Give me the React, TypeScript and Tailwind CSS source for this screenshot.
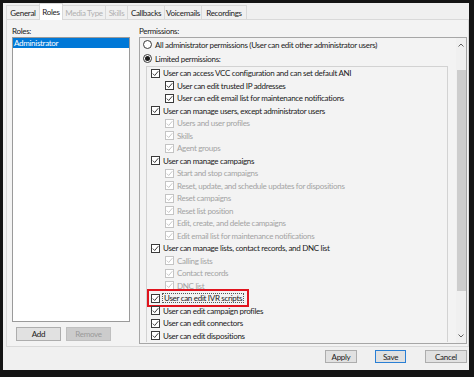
import clsx from 'clsx';

type Perm = { label: string; level: 0 | 1; disabled?: boolean; highlight?: boolean };

const TABS = [
  { label: 'General', w: 'w-[34px]' },
  { label: 'Roles', w: 'w-[24px]', active: true },
  { label: 'Media Type', w: 'w-[44px]', disabled: true },
  { label: 'Skills', w: 'w-[23px]', disabled: true },
  { label: 'Callbacks', w: 'w-[38px]' },
  { label: 'Voicemails', w: 'w-[38px]' },
  { label: 'Recordings', w: 'w-[46px]' },
];

const PERMS: Perm[] = [
  { label: 'User can access VCC configuration and can set default ANI', level: 0 },
  { label: 'User can edit trusted IP addresses', level: 1 },
  { label: 'User can edit email list for maintenance notifications', level: 1 },
  { label: 'User can manage users, except administrator users', level: 0 },
  { label: 'Users and user profiles', level: 1, disabled: true },
  { label: 'Skills', level: 1, disabled: true },
  { label: 'Agent groups', level: 1, disabled: true },
  { label: 'User can manage campaigns', level: 0 },
  { label: 'Start and stop campaigns', level: 1, disabled: true },
  { label: 'Reset, update, and schedule updates for dispositions', level: 1, disabled: true },
  { label: 'Reset campaigns', level: 1, disabled: true },
  { label: 'Reset list position', level: 1, disabled: true },
  { label: 'Edit, create, and delete campaigns', level: 1, disabled: true },
  { label: 'Edit email list for maintenance notifications', level: 1, disabled: true },
  { label: 'User can manage lists, contact records, and DNC list', level: 0 },
  { label: 'Calling lists', level: 1, disabled: true },
  { label: 'Contact records', level: 1, disabled: true },
  { label: 'DNC list', level: 1, disabled: true },
  { label: 'User can edit IVR scripts', level: 0, highlight: true },
  { label: 'User can edit campaign profiles', level: 0 },
  { label: 'User can edit connectors', level: 0 },
  { label: 'User can edit dispositions', level: 0 },
];

function CheckBox({ disabled }: { disabled?: boolean }) {
  return (
    <div
      className={clsx(
        'w-[9px] h-[9px] border bg-white flex items-center justify-center shrink-0',
        disabled ? 'border-[#c4c4c4]' : 'border-[#3a3a3a]',
      )}
    >
      <svg width="7" height="7" viewBox="0 0 7 7">
        <path
          d="M0.8 3.6 L2.7 5.5 L6.3 1.2"
          fill="none"
          stroke={disabled ? '#c0c0c0' : '#2a2a2a'}
          strokeWidth="0.9"
        />
      </svg>
    </div>
  );
}

function Radio({ checked }: { checked?: boolean }) {
  return (
    <div className="w-[9px] h-[9px] rounded-full border border-[#3a3a3a] bg-white flex items-center justify-center shrink-0">
      {checked && <div className="w-[5px] h-[5px] rounded-full bg-[#1a1a1a]" />}
    </div>
  );
}

function Button({ label, disabled, primary, className }: { label: string; disabled?: boolean; primary?: boolean; className?: string }) {
  return (
    <div
      className={clsx(
        'flex items-center justify-center border',
        disabled ? 'bg-[#cccccc] border-[#bfbfbf] text-[#9a9a9a]' : 'bg-[#e1e1e1] text-[#1a1a1a]',
        primary ? 'border-[#2a7fd4]' : !disabled && 'border-[#adadad]',
        className,
      )}
    >
      {label}
    </div>
  );
}

export default function App() {
  return (
    <div
      className="w-[474px] h-[377px] border-l-[3px] border-t-[3px] border-r-[5px] border-b-[7px] border-[#141414] bg-[#f0f0f0] flex flex-col text-[#1a1a1a] leading-none text-[8px] tracking-[-0.3px]"
      style={{ fontFamily: 'Lato, "Noto Sans", sans-serif' }}
    >
      {/* tab strip */}
      <div className="h-[16px] pl-[3px] flex items-end">
        {TABS.map(t => (
          <div
            key={t.label}
            className={clsx(
              'flex items-center justify-center whitespace-nowrap border-t border-l border-r -mr-px',
              t.w,
              t.active
                ? 'h-[17px] bg-white border-[#d9d9d9] relative z-10 -mb-px'
                : 'h-[14px] bg-[#f0f0f0] border-[#d9d9d9]',
              t.disabled ? 'text-[#b0b0b0]' : 'text-[#1a1a1a]',
            )}
          >
            {t.label}
          </div>
        ))}
      </div>

      {/* tab page */}
      <div className="ml-[3px] h-[328px] border border-[#d9d9d9] bg-[#f3f3f3] flex pl-[5px]">
        <div className="w-[118px] flex flex-col">
          <div className="mt-[5px] h-[11px] flex items-center">Roles:</div>
          <div className="mt-[1px] h-[285px] border border-[#9a9a9a] bg-white">
            <div className="h-[10px] bg-[#0078d7] text-white flex items-center pl-[1px]">Administrator</div>
          </div>
          <div className="mt-[5px] pl-[4px] flex gap-[5px]">
            <Button label="Add" className="w-[45px] h-[14px]" />
            <Button label="Remove" disabled className="w-[45px] h-[14px]" />
          </div>
        </div>

        <div className="ml-[9px] flex-1 flex flex-col">
          <div className="mt-[5px] h-[11px] flex items-center">Permissions:</div>
          <div className="mt-[1px] h-[307px] w-[328px] border border-[#a6a6a6] flex overflow-hidden">
            <div className="flex-1 pl-[3px] overflow-hidden">
              <div className="h-[13px] flex items-center gap-[3px] whitespace-nowrap">
                <Radio />
                <span>All administrator permissions (User can edit other administrator users)</span>
              </div>
              <div className="h-[15px] flex items-center gap-[3px] whitespace-nowrap">
                <Radio checked />
                <span>Limited permissions:</span>
              </div>
              <div className="ml-[3px] w-[302px] border-t border-l border-r border-[#d2d2d2] pl-[4px]">
                {PERMS.map(p => (
                  <div
                    key={p.label}
                    className={clsx(
                      'h-[12.5px] flex items-center whitespace-nowrap',
                      p.level === 1 && 'pl-[14px]',
                    )}
                  >
                    <div
                      className={clsx(
                        'flex items-center gap-[2px]',
                        p.highlight && 'outline-2 outline-[#e0141e] outline-offset-[2px] pr-[1px]',
                      )}
                    >
                      <CheckBox disabled={p.disabled} />
                      <span
                        className={clsx(
                          'px-[1px]',
                          p.disabled ? 'text-[#a3a3a3]' : 'text-[#1a1a1a]',
                          p.highlight && 'border border-dotted border-[#555]',
                        )}
                      >
                        {p.label}
                      </span>
                    </div>
                  </div>
                ))}
              </div>
            </div>
            {/* scrollbar */}
            <div className="w-[10px] bg-[#f0f0f0] flex flex-col items-center">
              <div className="h-[14px] flex items-center justify-center">
                <svg width="6" height="4" viewBox="0 0 6 4">
                  <path d="M0.5 3.5 L3 1 L5.5 3.5" fill="none" stroke="#606060" strokeWidth="1" />
                </svg>
              </div>
              <div className="mt-[18px] w-[9px] h-[221px] bg-[#cdcdcd]" />
              <div className="flex-1" />
              <div className="h-[14px] flex items-center justify-center">
                <svg width="6" height="4" viewBox="0 0 6 4">
                  <path d="M0.5 0.5 L3 3 L5.5 0.5" fill="none" stroke="#606060" strokeWidth="1" />
                </svg>
              </div>
            </div>
          </div>
        </div>
      </div>

      {/* dialog buttons */}
      <div className="flex justify-end pr-[2px] mt-[3px]">
        <Button label="Apply" className="w-[32px] h-[13px]" />
        <Button label="Save" primary className="ml-[18px] w-[31px] h-[13px]" />
        <Button label="Cancel" className="ml-[19px] w-[42px] h-[13px]" />
      </div>
    </div>
  );
}
